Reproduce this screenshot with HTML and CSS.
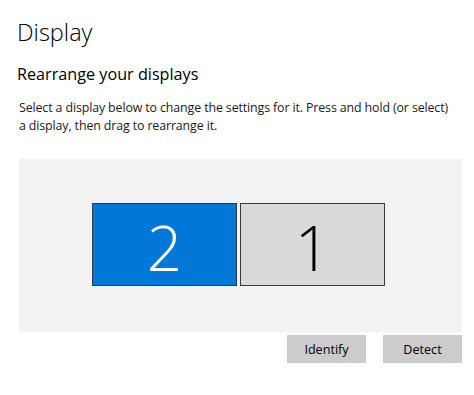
FILE: index.html
```html
<!DOCTYPE html>
<html lang="en">
<head>
    <meta charset="UTF-8">
    <title>Display</title>
    <link rel="stylesheet" href="styles.css">
</head>
<body>
    <div class="page">
        <h1 class="title">Display</h1>
        <h2 class="subtitle">Rearrange your displays</h2>
        <p class="hint">Select a display below to change the settings for it. Press and hold (or select) a display, then drag to rearrange it.</p>

        <div class="arrange">
            <div class="monitor selected">2</div>
            <div class="monitor">1</div>
        </div>

        <div class="actions">
            <button class="btn">Identify</button>
            <button class="btn">Detect</button>
        </div>
    </div>
</body>
</html>
```

FILE: styles.css
```css
body {
    margin: 0;
    background: #ffffff;
    color: #000000;
    font-family: 'Open Sans', 'Noto Sans', Arial, sans-serif;
}

.page {
    padding: 14px 12px 0 17px;
}

.title {
    margin: 0;
    font-size: 23.5px;
    font-weight: 300;
    line-height: 36px;
}

.subtitle {
    margin: 13px 0 0;
    font-size: 16.2px;
    font-weight: 400;
    line-height: 22px;
}

.hint {
    margin: 14px 12px 0 2px;
    font-size: 12.4px;
    letter-spacing: -0.12px;
    line-height: 18px;
    color: #1a1a1a;
}

.arrange {
    margin: 24px 0 0 2px;
    height: 173px;
    background: #f2f2f2;
    display: flex;
    gap: 3px;
    padding: 44px 0 0 73px;
    box-sizing: border-box;
}

.monitor {
    width: 145px;
    height: 83px;
    box-sizing: border-box;
    border: 1.5px solid #3a3a3a;
    background: #d9d9d9;
    color: #000000;
    display: flex;
    align-items: center;
    justify-content: center;
    font-size: 62px;
    font-weight: 300;
    line-height: 1;
    padding-top: 4px;
}

.monitor.selected {
    background: #0078d7;
    color: #ffffff;
    border-color: #2b3a4a;
}

.actions {
    display: flex;
    justify-content: flex-end;
    gap: 17px;
    margin-top: 3px;
}

.btn {
    width: 79px;
    height: 28px;
    border: none;
    background: #cccccc;
    color: #000000;
    font-family: inherit;
    font-size: 12.6px;
    padding: 0;
}
```
